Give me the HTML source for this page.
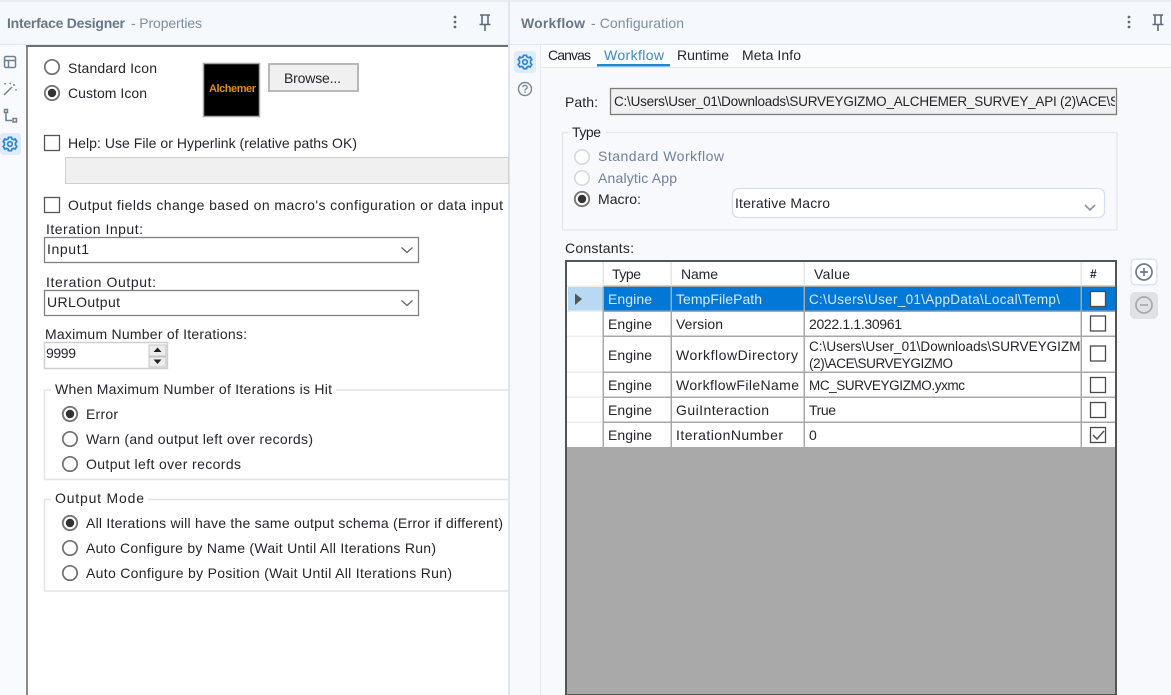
<!DOCTYPE html>
<html><head><meta charset="utf-8"><title>Interface Designer</title>
<style>
html,body{margin:0;padding:0;background:#f8f9fc;overflow:hidden}
svg{display:block;filter:blur(.35px)}
text{font-family:"Liberation Sans",sans-serif;font-size:14px;fill:#25252c;white-space:pre}
.h{fill:#6b7687;font-weight:bold}
.s{fill:#7f8ea6}
.d{fill:#6f819e}
.w{fill:#d6e8f8}
.t{font-size:13.5px}
</style></head><body>
<svg width="1171" height="695" viewBox="0 0 1171 695" xmlns="http://www.w3.org/2000/svg">
<defs>
<clipPath id="cp"><rect x="612" y="90" width="503" height="24"/></clipPath>
<clipPath id="cv"><rect x="805" y="338" width="276" height="34"/></clipPath>
<g id="ro"><circle r="7.200" fill="#fff" stroke="#707070" stroke-width="1.700"/></g>
<g id="rc"><circle r="7.200" fill="#fff" stroke="#777" stroke-width="1.900"/><circle r="4.200" fill="#333"/></g>
<g id="rd"><circle r="7.200" fill="#fff" stroke="#d5d8de" stroke-width="1.600"/></g>
<g id="dots" fill="#5f6b7c"><circle cy="-5" r="1.400"/><circle r="1.400"/><circle cy="5" r="1.400"/></g>
<g id="pin" fill="none" stroke="#5f6b7c" stroke-width="1.600"><path d="M-5 -7H5M-3 -7V2M3 -7V2M-5.500 2.500H5.500M0 3V9"/></g>
<g id="gear" fill="none" stroke="#2c86d4" stroke-width="1.700"><circle r="2.300"/><path d="M-1.500 -6.600H1.500L2 -5L3.600 -4.300L5.200 -5L6.800 -2.500L5.600 -1.300V1.300L6.800 2.500L5.200 5L3.600 4.300L2 5L1.500 6.600H-1.500L-2 5L-3.600 4.300L-5.200 5L-6.800 2.500L-5.600 1.300V-1.300L-6.800 -2.500L-5.200 -5L-3.600 -4.300L-2 -5Z"/></g>
<path id="chev" d="M-5.500 -2.500L0 2.500L5.500 -2.500" fill="none" stroke="#666" stroke-width="1.300"/>
</defs>

<rect width="1171" height="695" fill="#f8f9fc"/>
<rect width="1171" height="2" fill="#e9edf4"/>
<rect y="2" width="1171" height="42" fill="#f5f8fd"/>
<rect y="44" width="508" height="1" fill="#e3e9f3"/>
<rect x="510" y="44" width="661" height="1" fill="#dfe6f2"/>

<!-- LEFT PANEL -->
<text x="7" y="28" class="h" textLength="118">Interface Designer</text>
<text x="131" y="28" class="s" textLength="71">- Properties</text>
<use href="#dots" x="455" y="22"/>
<use href="#pin" x="485" y="22"/>

<rect x="0" y="45" width="26" height="650" fill="#f8fafd"/>
<rect x="28" y="47" width="480" height="648" fill="#fff"/>
<rect x="26" y="45" width="2" height="650" fill="#8a8a8a"/>
<rect x="26" y="45" width="482" height="2" fill="#6f6f6f"/>
<rect x="508" y="0" width="2" height="695" fill="#dfe6f3"/>

<g fill="none" stroke="#6f8095" stroke-width="1.500">
<rect x="4.500" y="56.500" width="11" height="11" rx="1.500"/>
<path d="M4.500 60.500H15.500M8.500 60.500V67.500"/>
<path d="M4 95L12 87M14 84V86M11 83.500H9.500M16 89V90.500M5 83V84.500" />
<rect x="4.500" y="109.500" width="3" height="3"/>
<path d="M6 113V120.500H12"/>
<rect x="13" y="118.500" width="3.500" height="3.500"/>
</g>
<rect x="0" y="133" width="21" height="22" rx="3" fill="#dfebfb"/>
<use href="#gear" x="10" y="144"/>

<use href="#ro" x="52" y="67"/>
<use href="#rc" x="52" y="93"/>
<text x="68" y="73" textLength="89">Standard Icon</text>
<text x="68" y="98" textLength="79">Custom Icon</text>

<rect x="203.500" y="63.500" width="56" height="53" fill="#000" stroke="#a8a8a8" stroke-width="1.500"/>
<text x="209" y="92" textLength="47" style="font-size:11px;fill:#e8890f;font-weight:bold">Alchemer</text>

<rect x="269" y="64" width="89" height="27" fill="#f0f0f0" stroke="#b8b8b8" stroke-width="2"/>
<text x="284" y="83" textLength="57">Browse...</text>

<rect x="44.500" y="135.500" width="15" height="15" fill="#fff" stroke="#555" stroke-width="1.300"/>
<text x="68" y="148" textLength="289">Help: Use File or Hyperlink (relative paths OK)</text>
<rect x="65.500" y="157.500" width="443" height="26" fill="#f0f0f0" stroke="#cfcfcf"/>

<rect x="44.500" y="197.500" width="15" height="15" fill="#fff" stroke="#555" stroke-width="1.300"/>
<text x="68" y="210" textLength="435">Output fields change based on macro's configuration or data input</text>

<text x="46" y="234" textLength="97">Iteration Input:</text>
<rect x="44.500" y="237.500" width="374" height="25" fill="#fff" stroke="#808080" stroke-width="1.300"/>
<text x="47" y="254" textLength="42">Input1</text>
<use href="#chev" x="407" y="250"/>

<text x="46" y="287" textLength="110">Iteration Output:</text>
<rect x="44.500" y="290.500" width="374" height="25" fill="#fff" stroke="#808080" stroke-width="1.300"/>
<text x="47" y="307" textLength="73">URLOutput</text>
<use href="#chev" x="407" y="303"/>

<text x="45" y="339" textLength="202">Maximum Number of Iterations:</text>
<rect x="44.500" y="342.500" width="123" height="26" fill="#fff" stroke="#cfcfcf" stroke-width="1.500"/>
<text x="46" y="358" textLength="30">9999</text>
<rect x="149" y="345" width="17" height="11" fill="#ececec" stroke="#c4c4c4"/>
<rect x="149" y="357" width="17" height="10" fill="#ececec" stroke="#c4c4c4"/>
<path d="M157.500 347.500L161.500 352H153.500ZM153.500 359.500H161.500L157.500 364Z" fill="#222"/>

<path d="M51 390H44.500V479.500H508M336 390H508" fill="none" stroke="#e2e3e6" stroke-width="1.500"/>
<text x="55" y="394" textLength="277">When Maximum Number of Iterations is Hit</text>
<use href="#rc" x="70" y="414"/><use href="#ro" x="70" y="439"/><use href="#ro" x="70" y="464"/>
<text x="86" y="419" textLength="32">Error</text>
<text x="86" y="444" textLength="227">Warn (and output left over records)</text>
<text x="86" y="469" textLength="155">Output left over records</text>

<path d="M51 499.500H44.500V591H508M148 499.500H508" fill="none" stroke="#e2e3e6" stroke-width="1.500"/>
<text x="55" y="503" textLength="89">Output Mode</text>
<use href="#rc" x="70" y="523"/><use href="#ro" x="70" y="548"/><use href="#ro" x="70" y="573"/>
<text x="86" y="528" textLength="417">All Iterations will have the same output schema (Error if different)</text>
<text x="86" y="553" textLength="350">Auto Configure by Name (Wait Until All Iterations Run)</text>
<text x="86" y="578" textLength="366">Auto Configure by Position (Wait Until All Iterations Run)</text>

<!-- RIGHT PANEL -->
<text x="521" y="28" class="h" textLength="64">Workflow</text>
<text x="591" y="28" class="s" textLength="93">- Configuration</text>
<use href="#dots" x="1129" y="22"/>
<use href="#pin" x="1158" y="22"/>

<rect x="540" y="45" width="631" height="22" fill="#fbfcfe"/>
<rect x="540" y="45" width="1" height="650" fill="#e3e9f3"/>
<rect x="540" y="67" width="631" height="1" fill="#dfe6f2"/>
<rect x="514" y="51" width="22" height="22" rx="3" fill="#dfebfb"/>
<use href="#gear" x="525" y="62"/>
<g fill="none" stroke="#7d8797" stroke-width="1.400"><circle cx="525" cy="89" r="6.500"/><path d="M522.800 87.200C523 84.800 527.200 84.800 527.200 87.300C527.200 88.800 525 88.800 525 90.500M525 91.500V92.800"/></g>

<text x="548" y="60" textLength="43">Canvas</text>
<text x="604" y="60" textLength="60" style="fill:#3d87c8">Workflow</text>
<text x="677" y="60" textLength="52">Runtime</text>
<text x="742" y="60" textLength="59">Meta Info</text>
<rect x="597" y="64" width="73" height="2.500" fill="#1e88d2"/>

<text x="565" y="107" textLength="33">Path:</text>
<rect x="610.500" y="88.500" width="506" height="26" fill="#f0f0f0" stroke="#7c7c7c" stroke-width="1.300"/>
<g clip-path="url(#cp)"><text x="614" y="106" class="t" textLength="505">C:\Users\User_01\Downloads\SURVEYGIZMO_ALCHEMER_SURVEY_API (2)\ACE\S</text></g>

<path d="M568 132.500H562.500V230H1117V132.500H606" fill="none" stroke="#e3e6ec" stroke-width="1.300"/>
<text x="572" y="137" textLength="29">Type</text>
<use href="#rd" x="582" y="157"/><use href="#rd" x="582" y="178"/><use href="#rc" x="582" y="199"/>
<text x="598" y="161" class="d" textLength="126">Standard Workflow</text>
<text x="598" y="183" class="d" textLength="79">Analytic App</text>
<text x="598" y="204" textLength="43">Macro:</text>
<rect x="732.500" y="188.500" width="372" height="29" rx="6" fill="#fff" stroke="#d5def0" stroke-width="1.300"/>
<text x="735" y="208" textLength="95">Iterative Macro</text>
<path d="M1085 205L1090 210L1095 205" fill="none" stroke="#8a93a3" stroke-width="1.600"/>

<text x="565" y="253" textLength="69">Constants:</text>

<rect x="566" y="261" width="550" height="434" fill="#a9a9a9" stroke="#555" stroke-width="2"/>
<rect x="567" y="262" width="548" height="185" fill="#fff"/>
<rect x="604" y="287" width="511" height="24" fill="#0078d7"/>
<rect x="568" y="287" width="35" height="24" fill="#b9d9f2"/>
<path d="M575 293.500L582 299L575 305Z" fill="#555"/>
<g fill="#eeeeee">
<rect x="567" y="310.500" width="36" height="1.500"/>
<rect x="567" y="335.500" width="36" height="1.500"/>
<rect x="567" y="371.500" width="36" height="1.500"/>
<rect x="567" y="396.500" width="36" height="1.500"/>
<rect x="567" y="421.500" width="36" height="1.500"/>
<rect x="567" y="285.500" width="36" height="1.500"/>
</g>
<g fill="#a8a8a8">
<rect x="603" y="285.500" width="512" height="1.500"/>
<rect x="603" y="310.500" width="512" height="1.500"/>
<rect x="603" y="335.500" width="512" height="1.500"/>
<rect x="603" y="371.500" width="512" height="1.500"/>
<rect x="603" y="396.500" width="512" height="1.500"/>
<rect x="603" y="421.500" width="512" height="1.500"/>
<rect x="602.500" y="287" width="1.500" height="160"/>
<rect x="670.500" y="287" width="1.500" height="160"/>
<rect x="803.500" y="287" width="1.500" height="160"/>
<rect x="1080.500" y="287" width="1.500" height="160"/>
</g>
<g fill="#e6e6e6">
<rect x="602.500" y="262" width="1.500" height="24"/>
<rect x="670.500" y="262" width="1.500" height="24"/>
<rect x="803.500" y="262" width="1.500" height="24"/>
<rect x="1080.500" y="262" width="1.500" height="24"/>
</g>

<text x="612" y="279" textLength="29">Type</text>
<text x="681" y="279" textLength="37">Name</text>
<text x="814" y="279" textLength="36">Value</text>
<text x="1090" y="278" textLength="8" style="font-weight:bold;font-size:12px">#</text>

<text x="608" y="304" class="w" textLength="44">Engine</text>
<text x="676" y="304" class="w" textLength="86">TempFilePath</text>
<text x="809" y="304" class="w t" textLength="251">C:\Users\User_01\AppData\Local\Temp\</text>

<text x="608" y="329" textLength="44">Engine</text>
<text x="676" y="329" textLength="47">Version</text>
<text x="809" y="329" textLength="93">2022.1.1.30961</text>

<text x="608" y="360" textLength="44">Engine</text>
<text x="676" y="360" textLength="122">WorkflowDirectory</text>
<g clip-path="url(#cv)"><text x="809" y="351" class="t" textLength="282">C:\Users\User_01\Downloads\SURVEYGIZMO</text>
<text x="809" y="368" class="t" textLength="144">(2)\ACE\SURVEYGIZMO</text></g>

<text x="608" y="390" textLength="44">Engine</text>
<text x="676" y="390" textLength="123">WorkflowFileName</text>
<text x="809" y="390" class="t" textLength="156">MC_SURVEYGIZMO.yxmc</text>

<text x="608" y="415" textLength="44">Engine</text>
<text x="676" y="415" textLength="93">GuiInteraction</text>
<text x="809" y="415" textLength="27">True</text>

<text x="608" y="440" textLength="44">Engine</text>
<text x="676" y="440" textLength="107">IterationNumber</text>
<text x="809" y="440" textLength="7">0</text>

<g fill="#fff" stroke="#4a4a4a" stroke-width="1.300">
<rect x="1090.500" y="291.500" width="15" height="15"/>
<rect x="1090.500" y="316" width="15" height="15"/>
<rect x="1090.500" y="346" width="15" height="15"/>
<rect x="1090.500" y="377.500" width="15" height="15"/>
<rect x="1090.500" y="402.500" width="15" height="15"/>
<rect x="1090.500" y="427.500" width="15" height="15"/>
</g>
<path d="M1093 435L1097 439L1104 431" fill="none" stroke="#555" stroke-width="1.500"/>

<rect x="1131" y="259" width="26" height="26" rx="5" fill="#fff" stroke="#dbe3f3" stroke-width="1.500"/>
<g fill="none" stroke="#6f7c8f" stroke-width="1.700"><circle cx="1144" cy="272" r="8"/><path d="M1140 272H1148M1144 268V276"/></g>
<rect x="1130" y="292" width="28" height="27" rx="5" fill="#e0e1e3"/>
<g fill="none" stroke="#a7aaae" stroke-width="1.700"><circle cx="1144" cy="305" r="8"/><path d="M1140 305H1148"/></g>
</svg>
</body></html>
